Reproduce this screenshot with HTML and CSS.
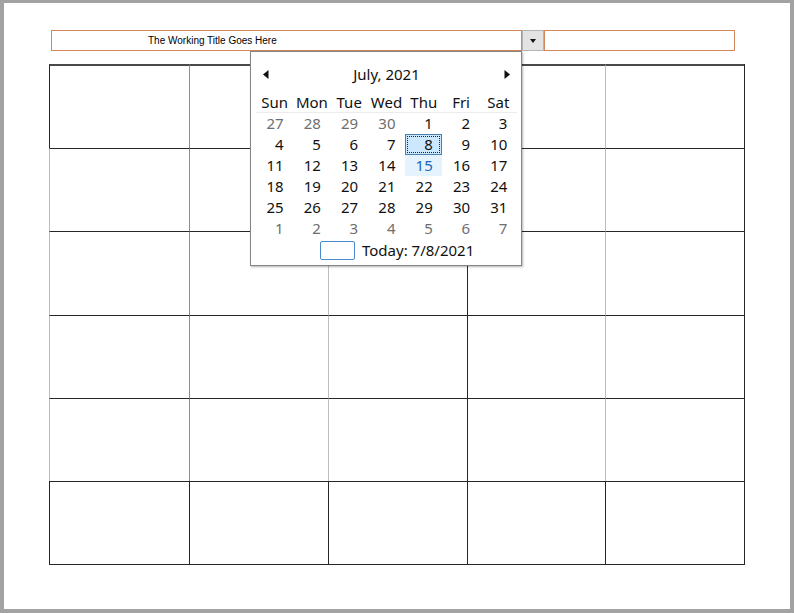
FILE: index.html
```html
<!DOCTYPE html>
<html lang="en">
<head>
<meta charset="utf-8">
<title>Calendar form</title>
<link rel="stylesheet" href="styles.css">
</head>
<body>
<div class="page">
  <div class="title-row">
    <div class="title-input">The Working Title Goes Here</div>
    <div class="drop-btn"><svg width="6" height="4" viewBox="0 0 6 4"><path d="M0 0H6L3 4Z" fill="#111"/></svg></div>
    <div class="side-input"></div>
  </div>

  <div class="month-grid">
    <div class="cell top"></div><div class="cell top v-gray"></div><div class="cell top v-light"></div><div class="cell top"></div><div class="cell top v-light"></div>
    <div class="cell v-light"></div><div class="cell v-gray"></div><div class="cell v-light"></div><div class="cell"></div><div class="cell v-light"></div>
    <div class="cell v-light"></div><div class="cell v-gray"></div><div class="cell v-light"></div><div class="cell"></div><div class="cell v-light"></div>
    <div class="cell v-light"></div><div class="cell v-gray"></div><div class="cell v-light"></div><div class="cell"></div><div class="cell v-light"></div>
    <div class="cell v-light"></div><div class="cell v-gray"></div><div class="cell v-light"></div><div class="cell"></div><div class="cell v-light"></div>
    <div class="cell"></div><div class="cell"></div><div class="cell"></div><div class="cell"></div><div class="cell"></div>
  </div>

  <div class="datepicker">
    <div class="dp-head">
      <svg class="dp-arrow prev" width="6" height="9" viewBox="0 0 6 9"><path d="M5.5 0V9L0 4.5Z" fill="#111"/></svg>
      <span class="dp-month">July, 2021</span>
      <svg class="dp-arrow next" width="6" height="9" viewBox="0 0 6 9"><path d="M0.5 0V9L6 4.5Z" fill="#111"/></svg>
    </div>
    <div class="dp-days">
      <span>Sun</span><span>Mon</span><span>Tue</span><span>Wed</span><span>Thu</span><span>Fri</span><span>Sat</span>
    </div>
    <div class="dp-dates">
      <div class="d other"><span>27</span></div><div class="d other"><span>28</span></div><div class="d other"><span>29</span></div><div class="d other"><span>30</span></div><div class="d"><span>1</span></div><div class="d"><span>2</span></div><div class="d"><span>3</span></div>
      <div class="d"><span>4</span></div><div class="d"><span>5</span></div><div class="d"><span>6</span></div><div class="d"><span>7</span></div><div class="d selected"><span>8</span></div><div class="d"><span>9</span></div><div class="d"><span>10</span></div>
      <div class="d"><span>11</span></div><div class="d"><span>12</span></div><div class="d"><span>13</span></div><div class="d"><span>14</span></div><div class="d hot"><span>15</span></div><div class="d"><span>16</span></div><div class="d"><span>17</span></div>
      <div class="d"><span>18</span></div><div class="d"><span>19</span></div><div class="d"><span>20</span></div><div class="d"><span>21</span></div><div class="d"><span>22</span></div><div class="d"><span>23</span></div><div class="d"><span>24</span></div>
      <div class="d"><span>25</span></div><div class="d"><span>26</span></div><div class="d"><span>27</span></div><div class="d"><span>28</span></div><div class="d"><span>29</span></div><div class="d"><span>30</span></div><div class="d"><span>31</span></div>
      <div class="d other"><span>1</span></div><div class="d other"><span>2</span></div><div class="d other"><span>3</span></div><div class="d other"><span>4</span></div><div class="d other"><span>5</span></div><div class="d other"><span>6</span></div><div class="d other"><span>7</span></div>
    </div>
    <div class="dp-foot">
      <span class="today-box"></span>
      <span class="today-text">Today: 7/8/2021</span>
    </div>
  </div>
</div>
</body>
</html>
```

FILE: styles.css
```css
* { box-sizing: border-box; }

html, body {
  margin: 0;
  padding: 0;
  background: #ffffff;
}

.page {
  position: relative;
  width: 794px;
  height: 613px;
  background: #ffffff;
  border-style: solid;
  border-color: #a2a2a2;
  border-width: 3px 4px 4px 4px;
  display: flex;
  flex-direction: column;
  padding-top: 27px;
}

/* ---------- title row ---------- */
.title-row {
  display: flex;
  height: 21px;
  margin-left: 47px;
}

.title-input {
  width: 471px;
  height: 21px;
  border: 1px solid #d4875a;
  font-family: "Liberation Sans", Arial, sans-serif;
  font-size: 10px;
  line-height: 19px;
  color: #000000;
  padding-left: 96px;
  white-space: nowrap;
}

.drop-btn {
  width: 22px;
  height: 21px;
  background: #e3e3e3;
  border: 1px solid #b4b4b4;
  display: flex;
  align-items: center;
  justify-content: center;
}

.side-input {
  width: 191px;
  height: 21px;
  border: 1px solid #d4875a;
}

/* ---------- month grid ---------- */
.month-grid {
  margin-top: 13px;
  margin-left: 45px;
  width: 696px;
  display: grid;
  grid-template-columns: 140px 139px 139px 138px 139px;
  grid-template-rows: 84px 83px 84px 83px 83px 83px;
  border-right: 1px solid #262626;
  border-bottom: 1px solid #262626;
}

.cell {
  border-top: 1px solid #262626;
  border-left: 1px solid #262626;
}

.cell.top {
  border-top: 2px solid #4a4a4a;
}

.cell.v-gray {
  border-left-color: #8e8e8e;
}

.cell.v-light {
  border-left-color: #bdbdbd;
}

/* ---------- date picker popup ---------- */
.datepicker {
  position: absolute;
  left: 246px;
  top: 48px;
  width: 272px;
  height: 215px;
  background: #ffffff;
  border: 1px solid #858585;
  box-shadow: 1px 1px 2px rgba(0, 0, 0, 0.3);
  padding: 10px 4px 5px 5px;
  font-family: "Noto Sans", "Open Sans", sans-serif;
  font-size: 15px;
  color: #111111;
}

.dp-head {
  height: 24px;
  display: flex;
  align-items: center;
  justify-content: space-between;
  padding: 0 7px;
}

.dp-month {
  line-height: 24px;
}

.dp-days {
  margin-top: 6px;
  display: grid;
  grid-template-columns: repeat(7, 1fr);
  height: 21px;
  line-height: 20px;
  border-bottom: 1px solid #ececec;
  text-align: center;
}

.dp-dates {
  display: grid;
  grid-template-columns: repeat(7, 1fr);
  grid-auto-rows: 21px;
}

.d {
  display: flex;
  align-items: center;
  justify-content: center;
  line-height: 21px;
}

.d span {
  display: inline-block;
  width: 18px;
  text-align: right;
}

.d.other {
  color: #6e6e6e;
}

.d.selected {
  background: #cce8ff;
  border: 1px solid #4d7fae;
  outline: 1px dotted #222;
  outline-offset: -3px;
}

.d.hot {
  background: #e5f3ff;
  color: #1a66b8;
}

.dp-foot {
  margin-top: 1px;
  height: 20px;
  display: flex;
  align-items: center;
  gap: 7px;
  padding-left: 64px;
}

.today-box {
  width: 35px;
  height: 19px;
  border: 1px solid #4a88cf;
  border-radius: 2px;
}

.today-text {
  line-height: 20px;
}
```
